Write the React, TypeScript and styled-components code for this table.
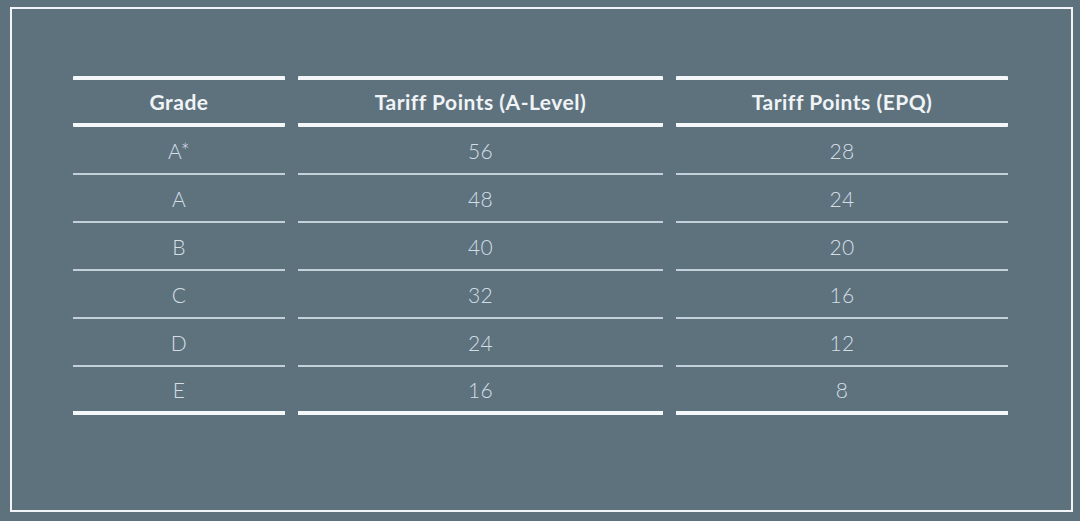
import React from 'react'
import styled, { createGlobalStyle } from 'styled-components'

const rows = [
  ['A*', '56', '28'],
  ['A', '48', '24'],
  ['B', '40', '20'],
  ['C', '32', '16'],
  ['D', '24', '12'],
  ['E', '16', '8'],
]

const headers = ['Grade', 'Tariff Points (A-Level)', 'Tariff Points (EPQ)']

export default function App() {
  return (
    <>
      <GlobalStyle />
      <Page>
        <Frame>
          <Table>
            {headers.map(h => (
              <HeadCell key={h}>{h}</HeadCell>
            ))}
            {rows.map((row, i) =>
              row.map((value, j) => (
                <Cell key={`${i}-${j}`} last={i === rows.length - 1}>
                  {value}
                </Cell>
              ))
            )}
          </Table>
        </Frame>
      </Page>
    </>
  )
}

const GlobalStyle = createGlobalStyle`
  html, body {
    margin: 0;
    padding: 0;
    background: #5e727e;
  }
  body {
    font-family: Lato, "Open Sans", sans-serif;
  }
`

const Page = styled.div`
  width: 1080px;
  height: 521px;
  box-sizing: border-box;
  padding: 7px 7px 9px 10px;
  background: #5e727e;
`

const Frame = styled.div`
  box-sizing: border-box;
  height: 100%;
  border: 2px solid #f2f5f7;
  padding: 67px 62px 0 61px;
`

const Table = styled.div`
  display: grid;
  grid-template-columns: 212px 365px 332px;
  column-gap: 13px;
`

const HeadCell = styled.div`
  height: 43px;
  border-top: 4px solid #f4f7f9;
  border-bottom: 4px solid #f4f7f9;
  border-radius: 1px;
  display: flex;
  align-items: center;
  justify-content: center;
  color: #f0f4f6;
  font-size: 21px;
  font-weight: 700;
  letter-spacing: 0.5px;
`

const Cell = styled.div<{ last?: boolean }>`
  height: ${p => (p.last ? '44px' : '46px')};
  border-bottom: ${p => (p.last ? '4px solid #f4f7f9' : '2px solid #c4d1da')};
  display: flex;
  align-items: center;
  justify-content: center;
  color: #d3dee5;
  font-size: 21px;
  font-weight: 300;
  letter-spacing: 0.3px;
`
